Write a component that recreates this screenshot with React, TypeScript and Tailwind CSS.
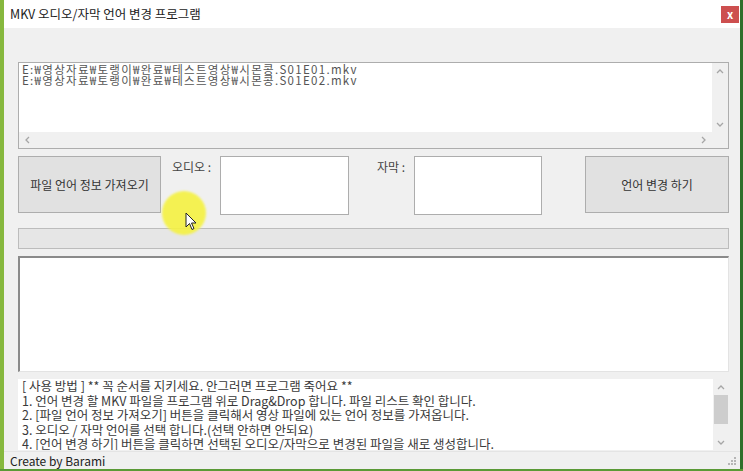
import React from "react";

const font = { fontFamily: '"Noto Sans CJK KR", "Noto Sans", sans-serif' };

function Chevron({ dir }: { dir: "up" | "down" | "left" | "right" }) {
  const d =
    dir === "up"
      ? "M1 5 L4 2 L7 5"
      : dir === "down"
      ? "M1 2 L4 5 L7 2"
      : dir === "left"
      ? "M5 1 L2 4 L5 7"
      : "M2 1 L5 4 L2 7";
  const w = dir === "up" || dir === "down" ? 8 : 7;
  const h = dir === "up" || dir === "down" ? 7 : 8;
  return (
    <svg width={w} height={h} viewBox={`0 0 ${w} ${h}`}>
      <path d={d} fill="none" stroke="#a6a6a6" strokeWidth="1.3" />
    </svg>
  );
}

const files = [
  "E:₩영상자료₩토랭이₩완료₩테스트영상₩시몬콩.S01E01.mkv",
  "E:₩영상자료₩토랭이₩완료₩테스트영상₩시몬콩.S01E02.mkv",
];

const guide = [
  "[ 사용 방법 ] ** 꼭 순서를 지키세요. 안그러면 프로그램 죽어요 **",
  "1. 언어 변경 할 MKV 파일을 프로그램 위로 Drag&Drop 합니다. 파일 리스트 확인 합니다.",
  "2. [파일 언어 정보 가져오기] 버튼을 클릭해서 영상 파일에 있는 언어 정보를 가져옵니다.",
  "3. 오디오 / 자막 언어를 선택 합니다.(선택 안하면 안되요)",
  "4. [언어 변경 하기] 버튼을 클릭하면 선택된 오디오/자막으로 변경된 파일을 새로 생성합니다.",
];

export default function App() {
  return (
    <div className="relative w-[743px] h-[471px] flex flex-col bg-[#2f6f2a] overflow-hidden" style={font}>
      <div className="flex flex-1">
        <div className="w-[4px] bg-[#86b83e]" />
        {/* window */}
        <div className="w-[736px] flex flex-col bg-[#f0f0f0]">
          {/* title bar */}
          <div className="h-[28px] bg-white flex items-center pl-[6px] pr-[1px]">
            <span className="text-[12.5px] text-[#222] flex-1 pt-[1px]">MKV 오디오/자막 언어 변경 프로그램</span>
            <div className="w-[18px] h-[17px] bg-[#cd4f4f] flex items-center justify-center text-white text-[11px] font-bold leading-none">
              x
            </div>
          </div>

          {/* body */}
          <div className="flex-1 flex flex-col pl-[14px] pr-[11px] pt-[34px]">
            {/* file list */}
            <div className="h-[87px] border border-[#adadad] bg-white flex">
              <div className="flex-1 flex flex-col">
                <div className="flex-1 pl-[3px] pt-[1px] text-[11.5px] leading-[11px] text-[#555] tracking-[1.3px]">
                  {files.map((f) => (
                    <div key={f}>{f}</div>
                  ))}
                </div>
                <div className="h-[16px] bg-[#f0f0f0] flex items-center justify-between px-[5px]">
                  <Chevron dir="left" />
                  <Chevron dir="right" />
                </div>
              </div>
              <div className="w-[16px] bg-[#f0f0f0] flex flex-col items-center">
                <div className="h-[16px] flex items-center">
                  <Chevron dir="up" />
                </div>
                <div className="flex-1" />
                <div className="h-[16px] flex items-center">
                  <Chevron dir="down" />
                </div>
                <div className="h-[16px]" />
              </div>
            </div>

            {/* controls row */}
            <div className="flex mt-[7px] h-[58px]">
              <div className="w-[143px] h-[57px] bg-[#e1e1e1] border border-[#adadad] flex items-center justify-center text-[12px] text-[#333]">
                파일 언어 정보 가져오기
              </div>
              <div className="w-[59px] pl-[11px] pt-[2px] text-[12px] text-[#444]">오디오 :</div>
              <div className="w-[129px] h-[59px] bg-white border border-[#adadad]" />
              <div className="w-[65px] pl-[28px] pt-[2px] text-[12px] text-[#444]">자막 :</div>
              <div className="w-[128px] h-[59px] bg-white border border-[#adadad]" />
              <div className="flex-1" />
              <div className="w-[144px] h-[57px] bg-[#e1e1e1] border border-[#adadad] flex items-center justify-center text-[12px] text-[#333]">
                언어 변경 하기
              </div>
            </div>

            {/* progress bar */}
            <div className="mt-[14px] h-[21px] bg-[#e6e6e6] border border-[#bcbcbc]" />

            {/* log box */}
            <div className="mt-[7px] h-[116px] bg-white border-t-2 border-l-2 border-t-[#8a8a8a] border-l-[#8a8a8a] border-b border-r border-b-[#e3e3e3] border-r-[#e3e3e3]" />

            {/* guide */}
            <div className="mt-[7px] h-[71px] bg-white flex overflow-hidden">
              <div className="flex-1 pl-[4px] text-[12.5px] leading-[14.5px] text-[#3a3a3a] whitespace-nowrap overflow-hidden">
                {guide.map((g) => (
                  <div key={g}>{g}</div>
                ))}
              </div>
              <div className="w-[16px] bg-[#f0f0f0] flex flex-col items-center">
                <div className="h-[16px] flex items-center">
                  <Chevron dir="up" />
                </div>
                <div className="w-[14px] h-[29px] bg-[#cdcdcd]" />
                <div className="flex-1" />
                <div className="h-[16px] flex items-center">
                  <Chevron dir="down" />
                </div>
              </div>
            </div>
          </div>

          {/* status bar */}
          <div className="h-[18px] mt-[1px] flex items-center pl-[6px] text-[12px] text-[#222] border-t border-[#e4e4e4]">
            <span className="flex-1">Create by Barami</span>
            <svg width="10" height="10" viewBox="0 0 10 10" className="mr-[3px]">
              <rect x="7" y="1" width="2" height="2" fill="#b5b5b5" />
              <rect x="4" y="4" width="2" height="2" fill="#b5b5b5" />
              <rect x="7" y="4" width="2" height="2" fill="#b5b5b5" />
              <rect x="1" y="7" width="2" height="2" fill="#b5b5b5" />
              <rect x="4" y="7" width="2" height="2" fill="#b5b5b5" />
              <rect x="7" y="7" width="2" height="2" fill="#b5b5b5" />
            </svg>
          </div>
        </div>
        <div className="flex-1 bg-[#2f6f2a]" />
      </div>
      <div className="h-[3px] bg-[#5a9a36]" />

      {/* cursor highlight overlay */}
      <div className="absolute left-[162px] top-[191px] w-[44px] h-[44px] rounded-full bg-[#f5f242] opacity-90 blur-[1px]" />
      <svg className="absolute left-[185px] top-[212px]" width="12" height="19" viewBox="0 0 12 19">
        <path d="M1 1 L1 15 L4.5 11.5 L7 17.5 L9 16.5 L6.5 11 L11 11 Z" fill="white" stroke="#222" strokeWidth="1" />
      </svg>
    </div>
  );
}
